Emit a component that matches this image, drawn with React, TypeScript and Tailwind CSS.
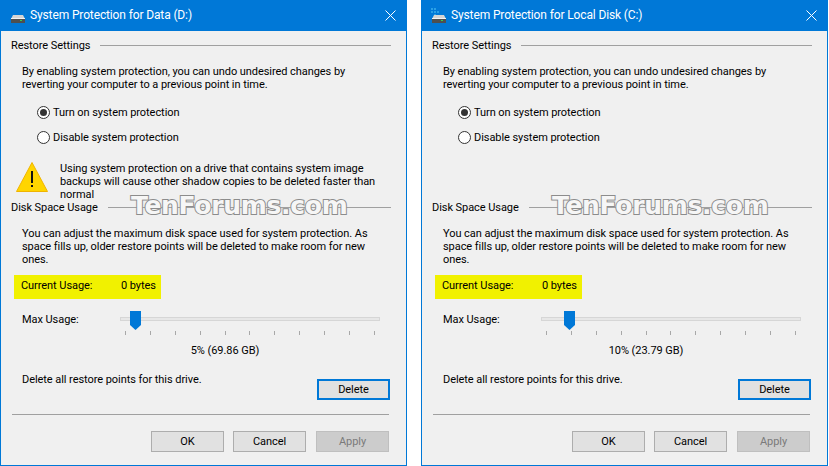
const SEGOE = "font-['Roboto','Open_Sans',sans-serif]";

function DriveIcon({ system }: { system?: boolean }) {
  return (
    <svg width="16" height="16" viewBox="0 0 16 16" className="shrink-0">
      {system && (
        <g fill="#2aa0e6">
          <rect x="0" y="0" width="2" height="2" />
          <rect x="3" y="0" width="2" height="2" />
          <rect x="0" y="3" width="2" height="2" />
          <rect x="3" y="3" width="2" height="2" />
          <rect x="6" y="3" width="2" height="2" />
          <rect x="3" y="6" width="2" height="2" />
        </g>
      )}
      <path d="M3 7h10l2 4H1z" fill="#d4d4d4" />
      <rect x="1" y="11" width="14" height="4" fill="#4f4f4f" />
      <rect x="1" y="10" width="14" height="1" fill="#f2f2f2" />
      <rect x="10" y="12" width="2" height="1" fill="#35d04f" />
    </svg>
  );
}

function WarningIcon() {
  return (
    <svg width="32" height="30" viewBox="0 0 32 30" className="shrink-0">
      <path d="M16 .5 31.5 29.5H.5z" fill="#ffd500" stroke="#f0b400" strokeWidth="1" />
      <rect x="15" y="9" width="2" height="12" fill="#111" />
      <rect x="15" y="23" width="2" height="2" fill="#111" />
    </svg>
  );
}

function Radio({ checked, label }: { checked?: boolean; label: string }) {
  return (
    <div className="flex items-center gap-[3px] h-[13px]">
      <span className="w-[13px] h-[13px] rounded-full border border-[#333] bg-white flex items-center justify-center">
        {checked && <span className="w-[7px] h-[7px] rounded-full bg-[#333]" />}
      </span>
      <span>{label}</span>
    </div>
  );
}

function GroupHeading({ title }: { title: string }) {
  return (
    <div className="flex items-center h-[13px] gap-[10px] mr-[15px]">
      <span className="whitespace-nowrap">{title}</span>
      <span className="h-px bg-[#a0a0a0] flex-1" />
    </div>
  );
}

function Button({ label, disabled, focused }: { label: string; disabled?: boolean; focused?: boolean }) {
  let cls = "border border-[#adadad] bg-[#e1e1e1] text-black";
  if (focused) cls = "border-2 border-[#0078d7] bg-[#e1e1e1] text-black";
  if (disabled) cls = "border border-[#bfbfbf] bg-[#cccccc] text-[#7a7a7a]";
  return (
    <div className={"w-[73px] h-[21px] flex items-center justify-center " + cls}>{label}</div>
  );
}

function Slider({ thumbLeft }: { thumbLeft: number }) {
  const ticks = Array.from({ length: 11 });
  return (
    <div className="relative w-[260px]">
      <div className="h-[4px] bg-[#e7e7e7] border border-[#d6d6d6]" />
      <div className="flex justify-between px-[5px] mt-[10px]">
        {ticks.map((_, i) => (
          <span key={i} className="w-px h-[4px] bg-[#a8a8a8]" />
        ))}
      </div>
      <svg width="11" height="19" viewBox="0 0 11 19" className="absolute top-[-6px]" style={{ left: thumbLeft }}>
        <path d="M0 0h11v14l-5.5 5L0 14z" fill="#0078d7" />
      </svg>
    </div>
  );
}

type DialogProps = {
  title: string;
  system?: boolean;
  warning?: boolean;
  thumbLeft: number;
  percent: string;
};

function Dialog({ title, system, warning, thumbLeft, percent }: DialogProps) {
  return (
    <div className="relative w-[407px] h-[466px] shrink-0 border border-[#0078d7] border-t-0 bg-[#f0f0f0] text-[11px] leading-[13px] tracking-[-0.06px] text-black">
      <div className="h-[31px] bg-[#0078d7] flex items-center text-white pl-[9px] pr-[10px]">
        <DriveIcon system={system} />
        <span className="ml-[4px] text-[12px] tracking-[-0.13px] flex-1">{title}</span>
        <svg width="11" height="11" viewBox="0 0 11 11">
          <path d="M.5.5l10 10M10.5.5l-10 10" stroke="#fff" strokeWidth="1" fill="none" />
        </svg>
      </div>

      <div className="pl-[10px] pt-[8px]">
        <GroupHeading title="Restore Settings" />
        <div className="pl-[11px] mt-[13px]">
          <p>By enabling system protection, you can undo undesired changes by</p>
          <p>reverting your computer to a previous point in time.</p>
        </div>
        <div className="pl-[26px] mt-[15px] flex flex-col gap-[12px]">
          <Radio checked label="Turn on system protection" />
          <Radio label="Disable system protection" />
        </div>
        <div className="h-[39px] mt-[18px] flex items-start gap-[12px] pl-[5px]">
          {warning && (
            <>
              <WarningIcon />
              <p className="w-[325px]">
                Using system protection on a drive that contains system image backups will cause other shadow copies to be deleted faster than normal
              </p>
            </>
          )}
        </div>
        <GroupHeading title="Disk Space Usage" />
        <div className="pl-[11px] mt-[13px]">
          <p>You can adjust the maximum disk space used for system protection. As</p>
          <p>space fills up, older restore points will be deleted to make room for new</p>
          <p>ones.</p>
        </div>
        <div className="w-[147px] h-[24px] mt-[9px] ml-[3px] pb-[3px] bg-[#f1f100] flex items-center pl-[7px]">
          <span className="w-[100px]">Current Usage:</span>
          <span>0 bytes</span>
        </div>
        <div className="flex items-start mt-[18px] pl-[11px]">
          <span className="w-[98px] -mt-[4px]">Max Usage:</span>
          <Slider thumbLeft={thumbLeft} />
        </div>
        <div className="w-[300px] ml-[64px] text-center mt-[9px]">{percent}</div>
        <div className="flex justify-between items-start mt-[22px] pl-[11px] pr-[16px]">
          <span className="-mt-[6px]">Delete all restore points for this drive.</span>
          <Button label="Delete" focused />
        </div>
        <div className="h-px bg-[#a0a0a0] mt-[14px] ml-[1px] mr-[17px]" />
        <div className="flex justify-end gap-[9px] mt-[16px] pr-[17px]">
          <Button label="OK" />
          <div className="mr-px">
            <Button label="Cancel" />
          </div>
          <Button label="Apply" disabled />
        </div>
      </div>

      <span className="absolute left-[130px] top-[191px] font-['DejaVu_Sans'] font-bold text-[25px] leading-[30px] text-[#f6f6f6] [-webkit-text-stroke:2px_#8c8c8c] [paint-order:stroke_fill] tracking-[-0.3px] whitespace-nowrap">
        TenForums.com
      </span>
    </div>
  );
}

export default function App() {
  return (
    <div className={"flex gap-[14px] w-[829px] h-[466px] bg-white overflow-hidden " + SEGOE}>
      <Dialog title="System Protection for Data (D:)" warning thumbLeft={10} percent="5% (69.86 GB)" />
      <Dialog title="System Protection for Local Disk (C:)" system thumbLeft={23} percent="10% (23.79 GB)" />
    </div>
  );
}
